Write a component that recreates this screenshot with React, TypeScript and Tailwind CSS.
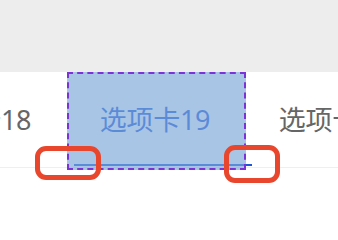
import React from 'react';

const tabs = ['选项卡18', '选项卡19', '选项卡20'];

export default function App() {
  return (
    <div
      className="relative w-[338px] h-[240px] overflow-hidden bg-white"
      style={{ fontFamily: '"Noto Sans", "Noto Sans CJK SC", sans-serif' }}
    >
      {/* top grey area */}
      <div className="h-[72px] bg-[#ededed]" />

      {/* tab strip */}
      <div className="relative h-[96px] overflow-hidden border-b border-[#efefef]">
        <div className="flex h-full ml-[-113.5px]">
          {tabs.map((t, i) => (
            <div
              key={t}
              className={`w-[179px] shrink-0 flex items-center justify-center text-[27px] leading-none tracking-[-0.3px] ${
                i === 1 ? 'text-[#1e56d6]' : 'text-[#666666]'
              }`}
            >
              {t}
            </div>
          ))}
        </div>
        <div className="absolute left-[74px] bottom-[1px] w-[178px] h-[2px] bg-[#1e56d6]" />
      </div>

      {/* element highlight overlay */}
      <div className="absolute left-[66.5px] top-[72px] w-[179px] h-[97.5px] border-2 border-dashed border-[#7a33d6] bg-[rgba(123,167,216,0.66)]" />

      {/* red annotation marks */}
      <div className="absolute left-[35px] top-[146px] w-[66px] h-[33.5px] border-[5px] border-[#e9472d] rounded-[11px]" />
      <div className="absolute left-[224px] top-[144.5px] w-[56px] h-[38px] border-[5px] border-[#e9472d] rounded-[11px]" />
    </div>
  );
}
